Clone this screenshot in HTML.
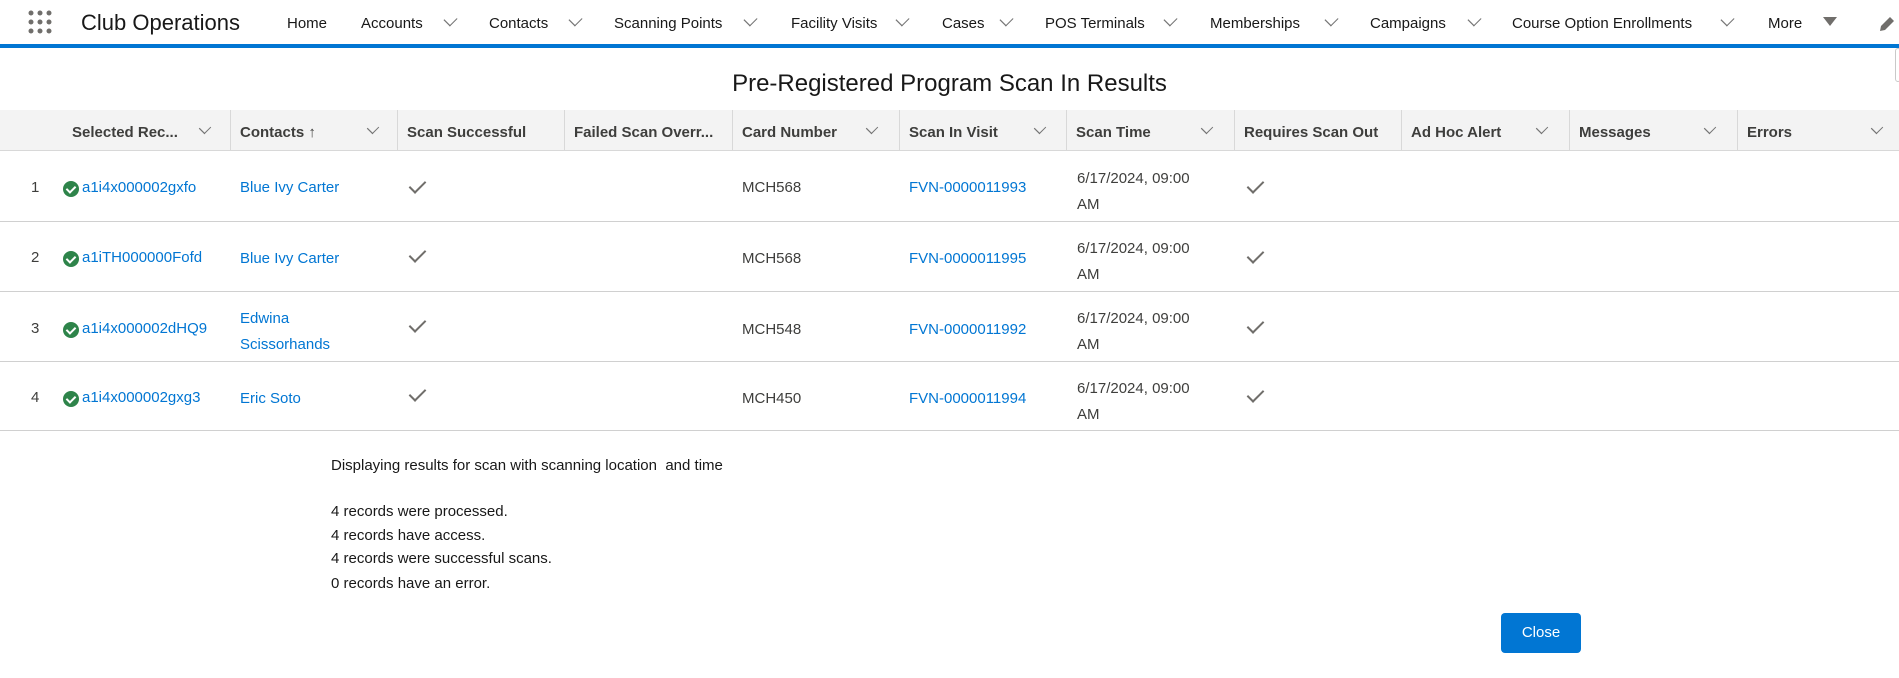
<!DOCTYPE html>
<html><head><meta charset="utf-8"><style>
*{margin:0;padding:0;box-sizing:border-box}
body{width:1899px;height:678px;background:#fff;font-family:"Liberation Sans",sans-serif;color:#181818;position:relative;overflow:hidden}
.a{position:absolute;white-space:nowrap}
.nav{font-size:15px;color:#181818;top:15px}
.chev{position:absolute;top:18px;width:9px;height:9px;border-right:1.5px solid #747474;border-bottom:1.5px solid #747474;transform:rotate(45deg) scaleY(1.2)}
.hd{font-size:15px;font-weight:bold;color:#3e3e3c;top:124px}
.hc{position:absolute;top:124px;width:8px;height:8px;border-right:1.5px solid #747474;border-bottom:1.5px solid #747474;transform:rotate(45deg) scaleY(1.2)}
.vl{position:absolute;top:110px;height:41px;width:1px;background:#d8d8d8}
.hl{position:absolute;left:0;width:1899px;height:1px;background:#d0d0d0}
.c{font-size:15px;color:#3e3e3c}
.l{font-size:15px;color:#0176d3}
.ck{position:absolute;width:9px;height:16px;border-right:2px solid #706e6b;border-bottom:2px solid #706e6b;transform:rotate(45deg)}
.gi{position:absolute;width:16px;height:16px;border-radius:50%;background:#2e844a}
.gi:after{content:"";position:absolute;left:5px;top:3px;width:4px;height:7px;border-right:2px solid #fff;border-bottom:2px solid #fff;transform:rotate(45deg)}
.t{font-size:15px;color:#181818;left:331px}
</style></head><body>
<svg class="a" style="left:27px;top:9px" width="26" height="26"><g fill="#706e6b"><circle cx="4" cy="4" r="2.5"/><circle cx="13" cy="4" r="2.5"/><circle cx="22" cy="4" r="2.5"/><circle cx="4" cy="13" r="2.5"/><circle cx="13" cy="13" r="2.5"/><circle cx="22" cy="13" r="2.5"/><circle cx="4" cy="22" r="2.5"/><circle cx="13" cy="22" r="2.5"/><circle cx="22" cy="22" r="2.5"/></g></svg>
<div class="a" style="left:81px;top:10px;font-size:22px;color:#181818">Club Operations</div>
<div class="a nav" style="left:287px">Home</div>
<div class="a nav" style="left:361px">Accounts</div><div class="chev" style="left:446px;top:15px"></div>
<div class="a nav" style="left:489px">Contacts</div><div class="chev" style="left:571px;top:15px"></div>
<div class="a nav" style="left:614px">Scanning Points</div><div class="chev" style="left:746px;top:15px"></div>
<div class="a nav" style="left:791px">Facility Visits</div><div class="chev" style="left:898px;top:15px"></div>
<div class="a nav" style="left:942px">Cases</div><div class="chev" style="left:1002px;top:15px"></div>
<div class="a nav" style="left:1045px">POS Terminals</div><div class="chev" style="left:1166px;top:15px"></div>
<div class="a nav" style="left:1210px">Memberships</div><div class="chev" style="left:1327px;top:15px"></div>
<div class="a nav" style="left:1370px">Campaigns</div><div class="chev" style="left:1470px;top:15px"></div>
<div class="a nav" style="left:1512px">Course Option Enrollments</div><div class="chev" style="left:1723px;top:15px"></div>
<div class="a nav" style="left:1768px">More</div>
<svg class="a" style="left:1823px;top:17px" width="14" height="10"><path d="M0 0H14L7 9Z" fill="#706e6b"/></svg>
<svg class="a" style="left:1877px;top:14px" width="20" height="20"><path d="M3 17L4 12L13 3L17 7L8 16Z" fill="#706e6b"/></svg>
<div class="a" style="left:0;top:44px;width:1899px;height:4px;background:#0176d3"></div>
<div class="a" style="left:1895px;top:48px;width:6px;height:34px;border:1px solid #c9c9c9;border-radius:4px"></div>
<div class="a" style="left:0;width:1899px;text-align:center;top:70px;font-size:24px;color:#181818">Pre-Registered Program Scan In Results</div>
<div class="a" style="left:0;top:110px;width:1899px;height:41px;background:#f3f3f3;border-bottom:1px solid #d8d8d8"></div>
<div class="vl" style="left:230px"></div><div class="vl" style="left:397px"></div><div class="vl" style="left:564px"></div><div class="vl" style="left:732px"></div><div class="vl" style="left:899px"></div><div class="vl" style="left:1066px"></div><div class="vl" style="left:1234px"></div><div class="vl" style="left:1401px"></div><div class="vl" style="left:1569px"></div><div class="vl" style="left:1737px"></div>
<div class="a hd" style="left:72px">Selected Rec...</div><div class="hc" style="left:201px"></div>
<div class="a hd" style="left:240px">Contacts ↑</div><div class="hc" style="left:369px"></div>
<div class="a hd" style="left:407px">Scan Successful</div>
<div class="a hd" style="left:574px">Failed Scan Overr...</div>
<div class="a hd" style="left:742px">Card Number</div><div class="hc" style="left:868px"></div>
<div class="a hd" style="left:909px">Scan In Visit</div><div class="hc" style="left:1036px"></div>
<div class="a hd" style="left:1076px">Scan Time</div><div class="hc" style="left:1203px"></div>
<div class="a hd" style="left:1244px">Requires Scan Out</div>
<div class="a hd" style="left:1411px">Ad Hoc Alert</div><div class="hc" style="left:1538px"></div>
<div class="a hd" style="left:1579px">Messages</div><div class="hc" style="left:1706px"></div>
<div class="a hd" style="left:1747px">Errors</div><div class="hc" style="left:1873px"></div>
<div class="hl" style="top:221px"></div><div class="hl" style="top:291px"></div><div class="hl" style="top:361px"></div><div class="hl" style="top:430px"></div>

<div class="a c" style="left:31px;top:179px">1</div><div class="gi" style="left:63px;top:181px"></div><div class="a l" style="left:82px;top:179px">a1i4x000002gxfo</div>
<div class="a l" style="left:240px;top:179px">Blue Ivy Carter</div><div class="ck" style="left:413px;top:177px"></div>
<div class="a c" style="left:742px;top:179px">MCH568</div><div class="a l" style="left:909px;top:179px">FVN-0000011993</div>
<div class="a c" style="left:1077px;top:166px;line-height:26px">6/17/2024, 09:00<br>AM</div><div class="ck" style="left:1251px;top:177px"></div>

<div class="a c" style="left:31px;top:249px">2</div><div class="gi" style="left:63px;top:251px"></div><div class="a l" style="left:82px;top:249px">a1iTH000000Fofd</div>
<div class="a l" style="left:240px;top:250px">Blue Ivy Carter</div><div class="ck" style="left:413px;top:246px"></div>
<div class="a c" style="left:742px;top:250px">MCH568</div><div class="a l" style="left:909px;top:250px">FVN-0000011995</div>
<div class="a c" style="left:1077px;top:236px;line-height:26px">6/17/2024, 09:00<br>AM</div><div class="ck" style="left:1251px;top:247px"></div>

<div class="a c" style="left:31px;top:320px">3</div><div class="gi" style="left:63px;top:322px"></div><div class="a l" style="left:82px;top:320px">a1i4x000002dHQ9</div>
<div class="a l" style="left:240px;top:306px;line-height:26px">Edwina<br>Scissorhands</div><div class="ck" style="left:413px;top:316px"></div>
<div class="a c" style="left:742px;top:321px">MCH548</div><div class="a l" style="left:909px;top:321px">FVN-0000011992</div>
<div class="a c" style="left:1077px;top:306px;line-height:26px">6/17/2024, 09:00<br>AM</div><div class="ck" style="left:1251px;top:317px"></div>

<div class="a c" style="left:31px;top:389px">4</div><div class="gi" style="left:63px;top:391px"></div><div class="a l" style="left:82px;top:389px">a1i4x000002gxg3</div>
<div class="a l" style="left:240px;top:390px">Eric Soto</div><div class="ck" style="left:413px;top:385px"></div>
<div class="a c" style="left:742px;top:390px">MCH450</div><div class="a l" style="left:909px;top:390px">FVN-0000011994</div>
<div class="a c" style="left:1077px;top:376px;line-height:26px">6/17/2024, 09:00<br>AM</div><div class="ck" style="left:1251px;top:386px"></div>

<div class="a t" style="top:457px">Displaying results for scan with scanning location &nbsp;and time</div>
<div class="a t" style="top:503px">4 records were processed.</div>
<div class="a t" style="top:527px">4 records have access.</div>
<div class="a t" style="top:550px">4 records were successful scans.</div>
<div class="a t" style="top:575px">0 records have an error.</div>
<div class="a" style="left:1501px;top:613px;width:80px;height:40px;background:#0176d3;border-radius:4px;color:#fff;font-size:15px;text-align:center;line-height:40px">Close</div>
</body></html>
